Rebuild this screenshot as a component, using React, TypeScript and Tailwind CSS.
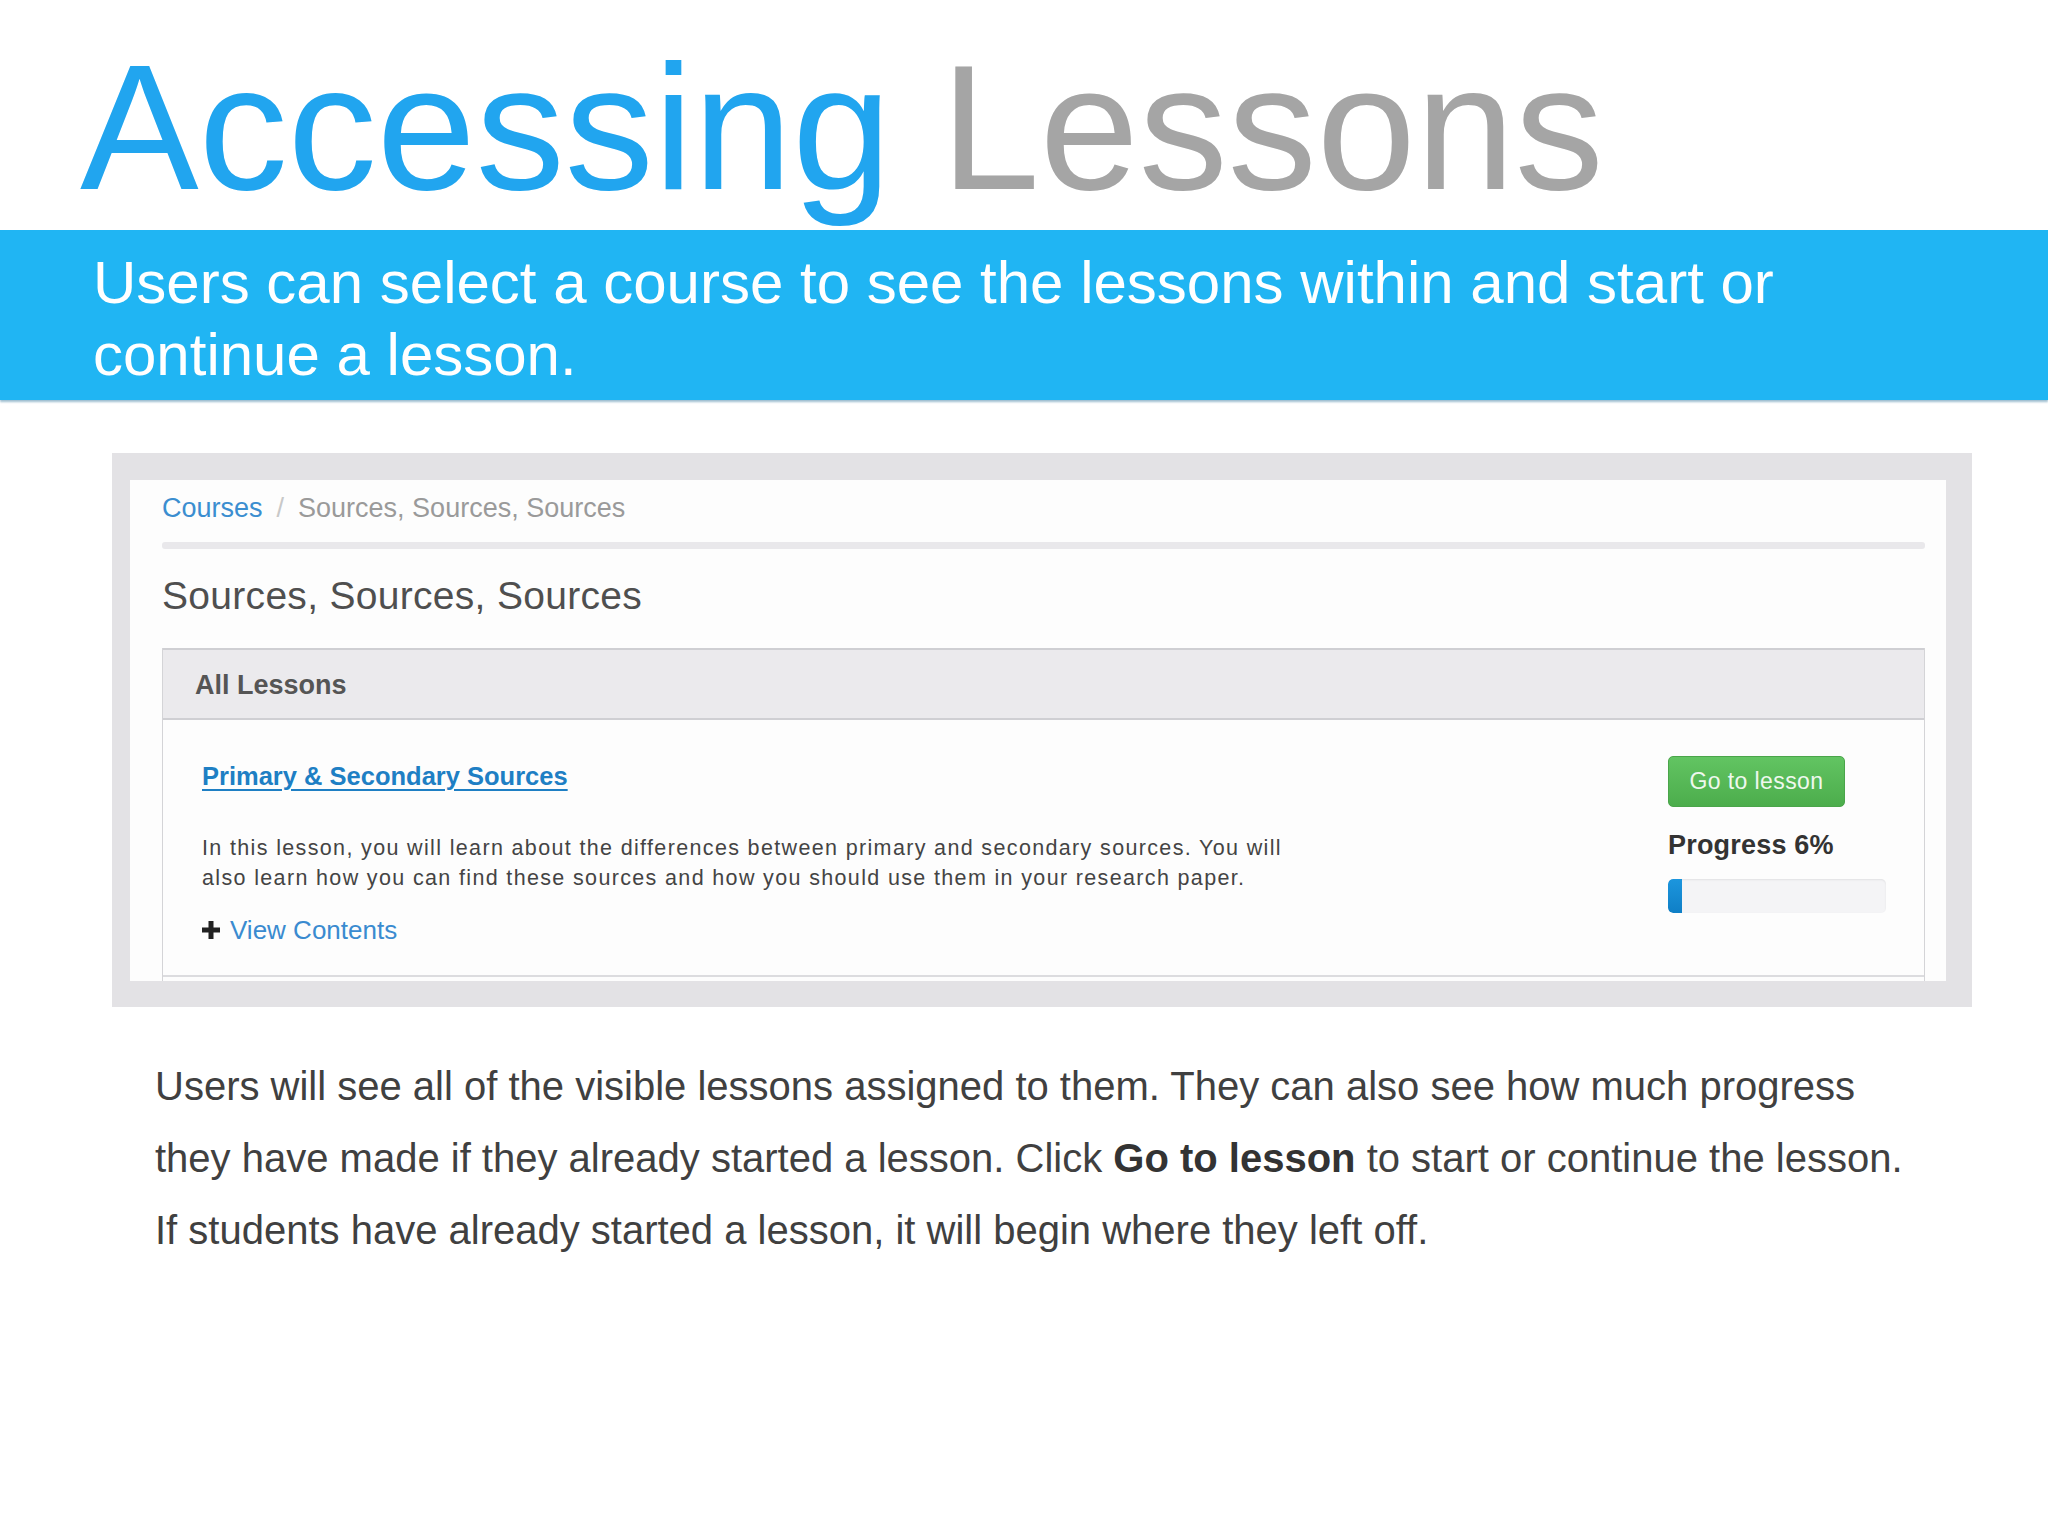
import React from "react";

const font = { fontFamily: '"Liberation Sans", Arial, sans-serif' };

function Plus() {
  return (
    <svg width="18" height="18" viewBox="0 0 18 18" className="shrink-0">
      <rect x="6.5" y="0" width="5" height="18" fill="#222" />
      <rect x="0" y="6.5" width="18" height="5" fill="#222" />
    </svg>
  );
}

export default function App() {
  return (
    <div className="w-[2048px] h-[1536px] bg-white overflow-hidden" style={font}>
      {/* Title */}
      <div className="h-[230px] pt-[39px] pl-[80px] text-[178px] leading-[178px] whitespace-nowrap">
        <span className="text-[#21a5ef]">Accessing</span>{" "}
        <span className="text-[#a5a5a5]">Lessons</span>
      </div>

      {/* Blue band */}
      <div className="h-[170px] bg-[#20b5f3] pt-[17px] pl-[93px] shadow-[0_2px_2px_rgba(40,110,150,0.45)]">
        <p className="w-[1780px] text-[60px] leading-[72px] text-white">
          Users can select a course to see the lessons within and start or continue a lesson.
        </p>
      </div>

      {/* Screenshot frame */}
      <div className="pt-[53px] pl-[112px]">
        <div className="w-[1860px] h-[554px] bg-[#e3e2e5] pt-[27px] pl-[18px] pr-[26px] pb-[26px]">
          <div className="h-full bg-[#fdfdfd] overflow-hidden pl-[32px] pr-[21px] pt-[10px]">
            {/* Breadcrumb */}
            <div className="flex items-baseline text-[27px] leading-[36px] whitespace-nowrap">
              <span className="text-[#3b8ed0]">Courses</span>
              <span className="text-[#c8c8c8] px-[14px]">/</span>
              <span className="text-[#9a9a9a]">Sources, Sources, Sources</span>
            </div>
            <div className="mt-[16px] h-[7px] rounded-[3px] bg-[#e9e8eb]" />

            {/* Heading */}
            <h1 className="mt-[23px] text-[39px] leading-[48px] tracking-[0.3px] text-[#4f4f4f]">
              Sources, Sources, Sources
            </h1>

            {/* Table */}
            <div className="mt-[28px] border-x border-[#d4d4d7]">
              <div className="h-[72px] border-t-2 border-b-2 border-[#cfcfd3] bg-[#ebeaed] pt-[19px] pl-[32px]">
                <span className="text-[27px] leading-[32px] font-bold text-[#555]">All Lessons</span>
              </div>
              <div className="h-[257px] border-b-2 border-[#dcdcdf] flex justify-between pl-[39px] pr-[38px]">
                <div className="pt-[40px]">
                  <a className="block text-[25.5px] leading-[32px] font-bold text-[#1e7fc4] underline underline-offset-[4px] decoration-[2px]">
                    Primary &amp; Secondary Sources
                  </a>
                  <p className="mt-[41px] w-[1105px] text-[21.5px] leading-[30px] tracking-[1.35px] text-[#444]">
                    In this lesson, you will learn about the differences between primary and secondary sources. You will also learn how you can find these sources and how you should use them in your research paper.
                  </p>
                  <div className="mt-[21px] flex items-center gap-[10px]">
                    <Plus />
                    <span className="text-[26px] leading-[32px] text-[#3a8bd0]">View Contents</span>
                  </div>
                </div>
                <div className="w-[218px] pt-[36px]">
                  <button className="w-[177px] h-[51px] rounded-[5px] border border-[#4aa54a] bg-gradient-to-b from-[#62c462] to-[#4cad4c] text-[23px] tracking-[0.4px] text-[#eef8ee]">
                    Go to lesson
                  </button>
                  <div className="mt-[22px] text-[27px] leading-[32px] font-bold tracking-[0.2px] text-[#333]">
                    Progress 6%
                  </div>
                  <div className="mt-[18px] h-[34px] w-[218px] rounded-[5px] bg-[#f4f4f6] shadow-[inset_0_1px_2px_rgba(0,0,0,0.08)] overflow-hidden">
                    <div className="h-full rounded-l-[5px] bg-gradient-to-b from-[#1c96de] to-[#0f7fc6]" style={{ width: "14px" }} />
                  </div>
                </div>
              </div>
              <div className="h-[40px]" />
            </div>
          </div>
        </div>
      </div>

      {/* Bottom paragraph */}
      <p className="mt-[43px] ml-[155px] w-[1762px] text-[40px] leading-[72px] text-[#404040]">
        Users will see all of the visible lessons assigned to them. They can also see how much progress they have made if they already started a lesson. Click <b className="font-bold text-[#333]">Go to lesson</b> to start or continue the lesson. If students have already started a lesson, it will begin where they left off.
      </p>
    </div>
  );
}
